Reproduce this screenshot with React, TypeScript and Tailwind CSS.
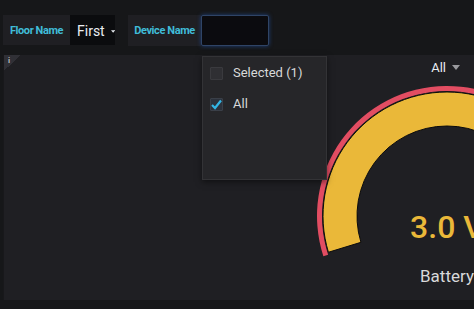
const font = { fontFamily: "Roboto, 'Liberation Sans', sans-serif" };

// gauge geometry: centre (140, 133) inside a 280 x 215 box
const CX = 140;
const CY = 133;
const toXY = (r: number, deg: number) => {
  const a = (deg * Math.PI) / 180;
  return [CX + r * Math.cos(a), CY + r * Math.sin(a)];
};
const band = (r1: number, r2: number, a1: number, a2: number) => {
  const [x1, y1] = toXY(r2, a1);
  const [x2, y2] = toXY(r2, a2);
  const [x3, y3] = toXY(r1, a2);
  const [x4, y4] = toXY(r1, a1);
  return `M${x1} ${y1} A${r2} ${r2} 0 1 1 ${x2} ${y2} L${x3} ${y3} A${r1} ${r1} 0 1 0 ${x4} ${y4} Z`;
};

function Caret() {
  return (
    <svg width="8" height="5" viewBox="0 0 8 5" className="ml-[6px]">
      <path d="M0 0 L8 0 L4 5 Z" fill="currentColor" />
    </svg>
  );
}

function Gauge() {
  return (
    <div className="relative w-[280px] h-[215px] shrink-0">
      <svg width="280" height="215" className="absolute inset-0">
        <path d={band(125, 130, 162, 377)} fill="#e24d62" />
        <path d={band(90, 124, 163, 377)} fill="#eab839" stroke="#0b0b0d" strokeWidth="1" />
      </svg>
      <div className="relative flex flex-col items-center pt-[125px]">
        <div className="text-[32px] leading-[38px] text-[#eab839] font-medium">3.0 V</div>
        <div className="mt-[20px] text-[17px] leading-[20px] text-[#d8d9da]">Battery</div>
      </div>
    </div>
  );
}

export default function App() {
  return (
    <div className="w-[474px] h-[309px] bg-[#161719] overflow-hidden" style={font}>
      {/* template variables */}
      <div className="h-[55px] flex items-start pt-[15px] pl-[3px]">
        <div className="flex h-[30px]">
          <div className="w-[67px] flex items-center justify-center bg-[#1f1f23] text-[#40bcd8] text-[11px] tracking-[-0.4px] font-bold pt-[2px]">Floor Name</div>
          <div className="w-[45px] flex items-center pl-[7px] pt-[2px] bg-[#0b0c0e] text-[#e9edf2] text-[14px]">
            First
            <Caret />
          </div>
        </div>
        <div className="flex h-[31px] ml-[13px]">
          <div className="w-[73px] flex items-center justify-center bg-[#1f1f23] text-[#40bcd8] text-[11px] tracking-[-0.4px] font-bold pt-[2px]">Device Name</div>
          <div className="w-[68px] bg-[#0b0b0f] border border-[#2f4466] rounded-[2px] shadow-[0_0_4px_#1f3f7a]" />
        </div>
      </div>

      {/* panel */}
      <div className="relative ml-[3px] h-[245px] bg-[#1f1f23] border-l border-[#18181b]">
        <div className="flex items-start h-[28px]">
          <div className="w-[16px] h-[16px] bg-[linear-gradient(135deg,#303036_50%,transparent_50%)] flex pl-[4px] pt-[1px]">
            <span className="text-[8px] leading-[10px] text-[#b8b8bc] font-bold">i</span>
          </div>
          <div className="ml-auto mr-[14px] mt-[3px] flex items-center text-[13px] text-[#e9edf2]">
            All
            <span className="text-[#9a9a9e]"><Caret /></span>
          </div>
        </div>
        <div className="flex pl-[303px]">
          <Gauge />
        </div>

        {/* dropdown menu of Device Name */}
        <div className="absolute left-[198px] top-[1px] w-[125px] h-[124px] bg-[#262629] border border-[#333336] shadow-[0_2px_6px_rgba(0,0,0,0.5)] pt-[8px] pl-[7px]">
          <div className="flex items-center h-[16px] gap-[10px]">
            <div className="w-[13px] h-[13px] bg-[#2f2f33] border border-[#3a3a3e] rounded-[1px]" />
            <span className="text-[13px] text-[#d8d9da]">Selected (1)</span>
          </div>
          <div className="flex items-center h-[16px] gap-[10px] mt-[15px]">
            <div className="w-[13px] h-[13px] bg-[#2c323c] border border-[#3a3f48] rounded-[1px] flex items-center justify-center">
              <svg width="11" height="11" viewBox="0 0 11 11">
                <path d="M1 6 L4 9 L10 1.5" fill="none" stroke="#33b5e5" strokeWidth="2.2" />
              </svg>
            </div>
            <span className="text-[13px] text-[#d8d9da]">All</span>
          </div>
        </div>
      </div>
    </div>
  );
}
